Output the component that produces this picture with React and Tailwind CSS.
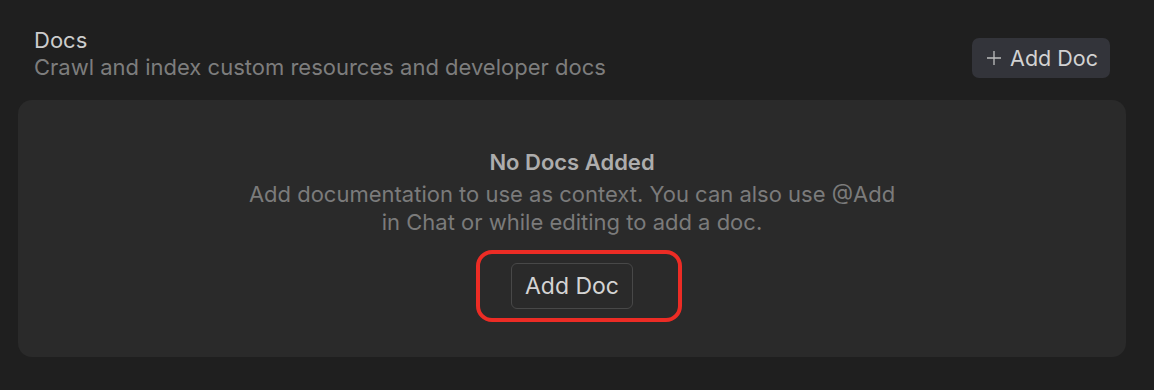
export default function App() {
  return (
    <div
      className="h-[390px] w-full bg-[#1f1f1f] pl-[18px] pr-[28px] pt-[27px]"
      style={{ fontFamily: 'Inter, "Noto Sans", sans-serif' }}
    >
      <div className="flex items-start justify-between pl-4 pr-4">
        <div>
          <h2 className="text-[22px] leading-[26px] text-[#cccccc]">Docs</h2>
          <p className="text-[22px] leading-[28px] text-[#7d7d7d]">
            Crawl and index custom resources and developer docs
          </p>
        </div>
        <button className="mt-[11px] flex h-[40px] items-center gap-[8px] rounded-[7px] bg-[#33343a] pl-[14px] pr-[12px] text-[21.5px] text-[#d2d2d2]">
          <svg width="16" height="16" viewBox="0 0 16 16" fill="none" stroke="#bdbdbd" strokeWidth="1.3">
            <path d="M8 1v14M1 8h14" />
          </svg>
          Add Doc
        </button>
      </div>

      <div className="mt-[19px] flex h-[257px] flex-col items-center rounded-[14px] bg-[#2a2a2a] pt-[48px]">
        <h3 className="text-[22px] font-semibold leading-[28px] text-[#adadad]">No Docs Added</h3>
        <p className="mt-[4px] text-center text-[22px] leading-[28px] text-[#7b7b7b]">
          Add documentation to use as context. You can also use @Add
          <br />
          in Chat or while editing to add a doc.
        </p>
        <div className="relative mt-[27px]">
          <button className="h-[46px] rounded-[6px] border border-[#484848] px-[13px] text-[23px] text-[#d4d4d4]">
            Add Doc
          </button>
          <div className="pointer-events-none absolute -bottom-[13px] -left-[35px] -right-[49px] -top-[13px] rounded-[16px] border-[4px] border-[#ec2c25]" />
        </div>
      </div>
    </div>
  );
}
